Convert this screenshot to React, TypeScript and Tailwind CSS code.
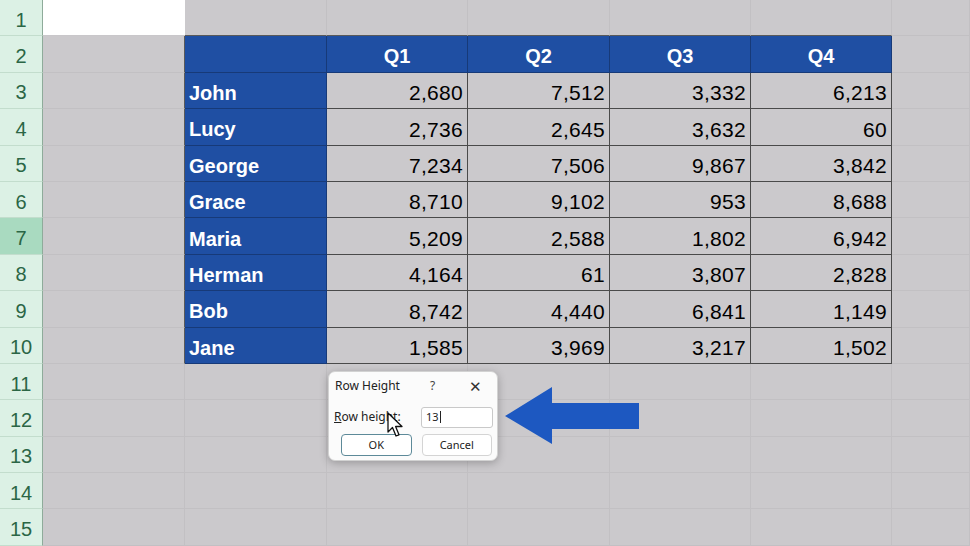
import React from "react";

const data: [string, string, string, string, string][] = [
  ["John", "2,680", "7,512", "3,332", "6,213"],
  ["Lucy", "2,736", "2,645", "3,632", "60"],
  ["George", "7,234", "7,506", "9,867", "3,842"],
  ["Grace", "8,710", "9,102", "953", "8,688"],
  ["Maria", "5,209", "2,588", "1,802", "6,942"],
  ["Herman", "4,164", "61", "3,807", "2,828"],
  ["Bob", "8,742", "4,440", "6,841", "1,149"],
  ["Jane", "1,585", "3,969", "3,217", "1,502"],
];

function Cell({ r, c }: { r: number; c: number }) {
  // r: 1..15, c: 0..7 (0 = row header)
  if (c === 0) {
    const sel = r === 7;
    return (
      <div
        className={`flex items-center justify-center pt-[4px] border-b border-r border-b-[#c3ddcd] border-r-[#8eab9a] text-[20px] text-[#2b6645] ${
          sel ? "bg-[#a9dac0]" : "bg-[#dcf1e5]"
        }`}
      >
        {r}
      </div>
    );
  }
  const inTable = r >= 2 && r <= 10 && c >= 2 && c <= 6;
  if (r === 1 && c === 1) {
    return <div className="bg-white border-b border-b-[#c9c7ca]" />;
  }
  if (!inTable) {
    const darkBottom = r === 1 && c >= 2 && c <= 6;
    const darkRight = c === 1 && r >= 2 && r <= 10;
    return (
      <div
        className={`border-r border-b ${darkBottom ? "border-b-[#5a5a5a]" : "border-b-[#c2c0c3]"} ${
          darkRight ? "border-r-[#5a5a5a]" : "border-r-[#c2c0c3]"
        }`}
      />
    );
  }
  if (r === 2) {
    const label = c === 2 ? "" : `Q${c - 2}`;
    return (
      <div className="flex items-center justify-center pt-[4px] bg-[#1f4fa3] border-r border-b border-[#173a78] text-white font-bold text-[20px]">
        {label}
      </div>
    );
  }
  const row = data[r - 3];
  if (c === 2) {
    return (
      <div className="flex items-center pl-[4px] pt-[5px] bg-[#1f4fa3] border-r border-b border-[#173a78] text-white font-bold text-[20px]">
        {row[0]}
      </div>
    );
  }
  return (
    <div className="flex items-center justify-end pr-[4px] pt-[5px] border-r border-b border-[#4a4a4a] text-black text-[21px] tracking-[0.3px]">
      {row[c - 2]}
    </div>
  );
}

export default function App() {
  const rows = Array.from({ length: 15 }, (_, i) => i + 1);
  const cols = Array.from({ length: 8 }, (_, i) => i);
  return (
    <div
      className="relative w-[970px] h-[546px] overflow-hidden bg-[#cbc9cc]"
      style={{ fontFamily: '"Liberation Sans", Arial, sans-serif' }}
    >
      <div className="grid grid-cols-[43px_142px_142px_141px_142px_141px_141px_1fr] grid-rows-[repeat(15,36.4px)] h-full">
        {rows.map((r) => cols.map((c) => <Cell key={`${r}-${c}`} r={r} c={c} />))}
      </div>

      {/* Row Height dialog */}
      <div
        className="absolute left-[328px] top-[371px] w-[170px] h-[90px] rounded-[7px] bg-[#fbfbfb] border border-[#d2d2d2] shadow-[0_2px_8px_rgba(0,0,0,0.25)] text-[#222] text-[12px] flex flex-col px-[5px]"
        style={{ fontFamily: '"Noto Sans", "Liberation Sans", sans-serif' }}
      >
        <div className="flex items-center h-[28px] pl-[1px]">
          <span>Row Height</span>
          <span className="ml-[30px] text-[#444]">?</span>
          <span className="ml-auto mr-[10px] text-[15px] leading-none text-[#333]">✕</span>
        </div>
        <div className="flex items-center h-[24px] mt-[5px]">
          <span>
            <span className="underline">R</span>ow height:
          </span>
          <div className="ml-auto mr-[-1px] w-[72px] h-[21px] border border-[#c9c9c9] rounded-[3px] bg-white flex items-center pl-[4px] text-[11px]">
            13<span className="inline-block w-[1px] h-[12px] bg-[#222] ml-[1px]" />
          </div>
        </div>
        <div className="flex items-center mt-[5px] pl-[7px] gap-[10px]">
          <div className="w-[72px] h-[22px] rounded-[4px] border border-[#5d8a99] bg-white flex items-center justify-center text-[11px]">
            OK
          </div>
          <div className="w-[72px] h-[22px] rounded-[4px] border border-[#d4d4d4] bg-white flex items-center justify-center text-[11px]">
            Cancel
          </div>
        </div>
      </div>

      {/* mouse cursor */}
      <svg className="absolute left-[387px] top-[412px]" width="18" height="26" viewBox="0 0 18 26">
        <path
          d="M1 1 L1 20 L5.5 15.5 L9 24 L12 22.8 L8.6 14.5 L15 14.5 Z"
          fill="#fff"
          stroke="#111"
          strokeWidth="1.3"
          strokeLinejoin="round"
        />
      </svg>

      {/* big blue arrow */}
      <svg className="absolute left-[505px] top-[387px]" width="134" height="57" viewBox="0 0 134 57">
        <polygon points="0,29 47,0 47,16 134,16 134,42 47,42 47,57" fill="#1d58c1" />
      </svg>
    </div>
  );
}
